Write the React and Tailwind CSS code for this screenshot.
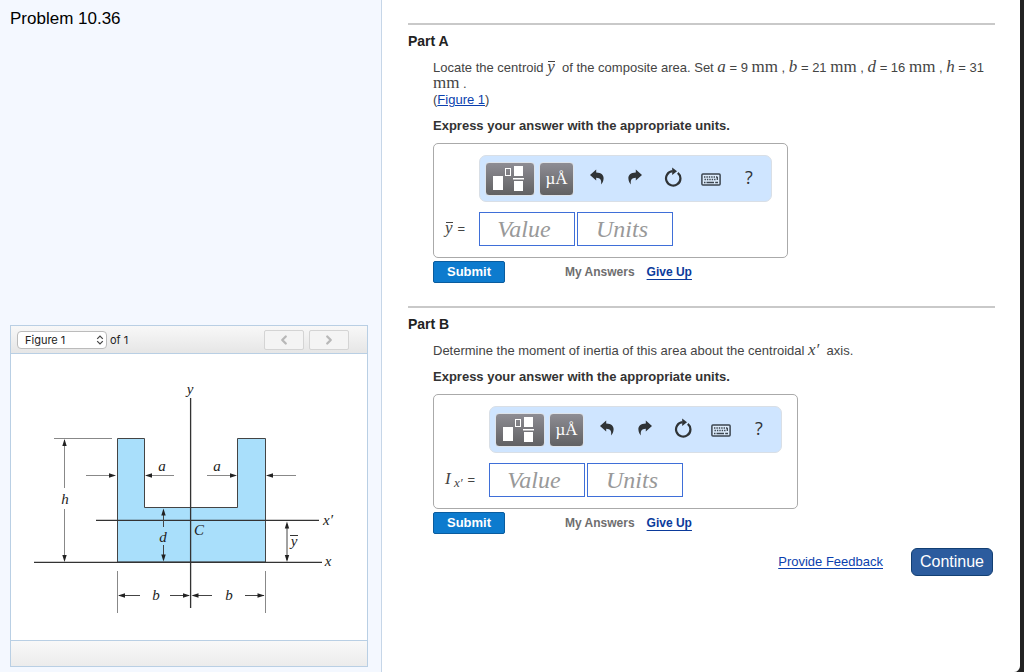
import {useState} from 'react';
import {ChevronLeft, ChevronRight} from 'lucide-react';

const MATH = "font-['Liberation_Serif',serif] text-[17px] leading-[0px]";

function Var({children}) {
  return <i className={MATH}>{children}</i>;
}

function Unit() {
  return <span className={MATH}>mm</span>;
}

/* Letter with a bar above it */
function Bar({children}) {
  return (
    <i className={`${MATH} relative`}>
      {children}
      <span className="absolute left-[1px] top-1 h-px w-[7px] bg-[#444]" />
    </i>
  );
}

function TemplateIcon() {
  return (
    <svg viewBox="0 0 36 28" className="w-9 h-7" aria-hidden="true">
      <rect x="1" y="11" width="10" height="14" fill="#fff" />
      <rect x="13.5" y="3.5" width="5" height="7" fill="none" stroke="#fff" />
      <rect x="22" y="1" width="9" height="10" fill="#fff" />
      <rect x="21" y="13" width="11" height="1.5" fill="#fff" />
      <rect x="22" y="16" width="9" height="10" fill="#fff" />
    </svg>
  );
}

function ArrowIcon({flip}) {
  return (
    <svg
      viewBox="0 0 14 16"
      className={`mb-1 h-4 w-[14px] ${flip ? '-scale-x-100' : ''}`}
      aria-hidden="true"
    >
      <path
        d="M0 6 L6.2 0.5 V3.4 C11.5 3.5 13.8 6 13.6 9.5 C13.5 12 12.5 14 11 15.5 C11.8 11.2 10.5 9 6.2 8.8 V11.5 Z"
        fill="#2f3336"
      />
    </svg>
  );
}

function ResetIcon() {
  return (
    <svg viewBox="0 0 18 20" className="mb-1 h-5 w-[18px]" aria-hidden="true">
      <path
        d="M13.8 5.8 A7.2 7.2 0 1 1 8.5 4.2"
        fill="none"
        stroke="#2f3336"
        strokeWidth="2.2"
      />
      <path d="M8.2 0.5 L13 4.2 L8.2 8 Z" fill="#2f3336" />
    </svg>
  );
}

function KeyboardIcon() {
  return (
    <svg viewBox="0 0 20 13" className="mt-[2px] h-[13px] w-5" aria-hidden="true">
      <rect
        x="0.9"
        y="0.9"
        width="18.2"
        height="11.2"
        rx="1"
        fill="#dcebfb"
        stroke="#3c4650"
        strokeWidth="1.5"
      />
      <path
        d="M3 4 H17 M3.5 6.5 H15.5"
        stroke="#3c4650"
        strokeWidth="1.4"
        strokeDasharray="1.4 1"
      />
      <path
        d="M3 9.5 H4.500 M5.5 9.5 H13 M14.2 9.5 H17 M16.3 4 V7"
        stroke="#3c4650"
        strokeWidth="1.3"
      />
    </svg>
  );
}

function ToolButton({label, children}) {
  return (
    <button
      type="button"
      aria-label={label}
      className="flex h-8 w-[38px] items-center justify-center"
    >
      {children}
    </button>
  );
}

function Toolbar() {
  const dark =
    'flex h-[34px] items-center justify-center rounded-[4px] border border-[#dde3ea] bg-linear-to-b from-[#8e8d94] to-[#616163] text-white';
  return (
    <div className="flex h-[47px] items-center rounded-[7px] border border-[#d9dfe6] bg-[#cfe5ff] pl-[5px] pr-[3px]">
      <button type="button" aria-label="Templates" className={`${dark} w-[50px]`}>
        <TemplateIcon />
      </button>
      <button
        type="button"
        aria-label="Symbols"
        className={`${dark} ml-1 w-[35px] font-['Liberation_Serif',serif] text-[17px]`}
      >
        µÅ
      </button>
      <div className="ml-1 flex">
        <ToolButton label="Undo">
          <ArrowIcon />
        </ToolButton>
        <ToolButton label="Redo">
          <ArrowIcon flip />
        </ToolButton>
        <ToolButton label="Reset">
          <ResetIcon />
        </ToolButton>
        <ToolButton label="Keyboard">
          <KeyboardIcon />
        </ToolButton>
        <ToolButton label="Help">
          <span className="mb-1 font-['Open_Sans',sans-serif] text-[18px] text-[#2f3336]">
            ?
          </span>
        </ToolButton>
      </div>
    </div>
  );
}

function Part({id, title, symbol, labelWidth, children}) {
  const field =
    "h-[34px] w-24 border border-[#3f6fd8] bg-white pr-[6px] text-center font-['Liberation_Serif',serif] text-[24px] italic placeholder:text-[#999] focus:outline-none";
  return (
    <section className="border-t-2 border-[#c9c9c9] pt-2">
      <h2 className="text-[14px] leading-4 font-bold text-[#222]">{title}</h2>
      <div className="ml-[25px] mt-[11px]">
        {children}
        <p className="mt-[10px] font-bold text-[#333]">
          Express your answer with the appropriate units.
        </p>
        <div className="mt-[9px] flex w-fit items-end rounded-[5px] border border-[#aaa] py-[11px] pl-[11px] pr-[15px]">
          <label
            htmlFor={`${id}-value`}
            className={`${labelWidth} flex h-[34px] items-center gap-[5px]`}
          >
            <span>{symbol}</span>
            <span>=</span>
          </label>
          <div>
            <Toolbar />
            <div className="mt-[10px] flex gap-[2px]">
              <input id={`${id}-value`} placeholder="Value" className={field} />
              <input aria-label="Units" placeholder="Units" className={field} />
            </div>
          </div>
        </div>
        <div className="mt-[3px] flex items-center font-bold">
          <button
            type="button"
            className="h-[22px] w-[72px] rounded-[2px] border border-[#0a5c9e] bg-[#0d7bce] text-white"
          >
            Submit
          </button>
          <span className="ml-[60px] text-[12px] text-[#6e6e6e]">
            My Answers
          </span>
          <a
            href="#give-up"
            className="ml-3 text-[12px] text-[#0b3a9b] underline underline-offset-3"
          >
            Give Up
          </a>
        </div>
      </div>
    </section>
  );
}

/* Filled arrow head, pointing in the given direction */
function Head({x, y, dir}) {
  const angle = {right: 0, down: 90, left: 180, up: 270}[dir];
  return (
    <path
      d="M0 0 L-7 -2.2 V2.2 Z"
      fill="#222"
      transform={`translate(${x} ${y}) rotate(${angle})`}
    />
  );
}

function Diagram() {
  return (
    <svg
      viewBox="11 354 356 286"
      className="block w-full"
      role="img"
      aria-label="U-shaped composite area"
    >
      <path
        d="M117.5 562 V438.5 H144.5 V507.5 H237.5 V438.5 H265.5 V562 Z"
        fill="#a9dffb"
        stroke="#444"
      />
      <g stroke="#333" strokeWidth="1.3">
        <path d="M34 562.3 H322 M96 520.4 H319 M190.6 398 V608" />
      </g>
      <g stroke="#888">
        <path d="M54 438.5 H112 M64.5 440 V488 M64.5 509 V560" />
        <path d="M86 475.5 H112 M148 475.5 H174 M207 475.5 H233 M270 475.5 H296" />
        <path d="M117.5 571 V613 M265.5 571 V613" />
      </g>
      <g stroke="#444">
        <path d="M163.5 510 V527 M163.5 545 V560 M287 524 V560" />
        <path d="M119 595.5 H140 M170 595.5 H189 M193 595.5 H212 M245 595.5 H264" />
      </g>
      <Head x={64.5} y={439} dir="up" />
      <Head x={64.5} y={562} dir="down" />
      <Head x={116} y={475.5} dir="right" />
      <Head x={145} y={475.5} dir="left" />
      <Head x={237} y={475.5} dir="right" />
      <Head x={266} y={475.5} dir="left" />
      <Head x={163.5} y={508.5} dir="up" />
      <Head x={163.5} y={561.5} dir="down" />
      <Head x={287} y={521.5} dir="up" />
      <Head x={287} y={562} dir="down" />
      <Head x={118} y={595.5} dir="left" />
      <Head x={190} y={595.5} dir="right" />
      <Head x={191.5} y={595.5} dir="left" />
      <Head x={264.5} y={595.5} dir="right" />
      <path d="M290 535.5 H298" stroke="#333" />
      <g
        className="font-['Liberation_Serif',serif] text-[15px] italic"
        fill="#222"
        textAnchor="middle"
      >
        <text x="190" y="394">y</text>
        <text x="162" y="471">a</text>
        <text x="217" y="471">a</text>
        <text x="65" y="504">h</text>
        <text x="163" y="542">d</text>
        <text x="199" y="535">C</text>
        <text x="294" y="546">y</text>
        <text x="328" y="525">x′</text>
        <text x="328" y="566">x</text>
        <text x="156" y="600">b</text>
        <text x="229" y="600">b</text>
      </g>
    </svg>
  );
}

function FigurePanel() {
  const [figure, setFigure] = useState('1');
  const nav =
    'flex h-5 w-10 items-center justify-center rounded-[2px] border border-[#d4d4d4] bg-[#f4f4f4] text-[#b8b8b8]';
  return (
    <div className="border border-[#b9cfe4] bg-white">
      <div className="flex h-7 items-center border-b border-[#b9cfe4] bg-linear-to-b from-[#f8f8f8] to-[#e6e6e6] pl-[6px] pr-[18px] font-['Inter',sans-serif] text-[12px] text-[#222]">
        <div className="relative">
          <select
            aria-label="Figure"
            value={figure}
            onChange={(e) => setFigure(e.target.value)}
            className="block h-[18px] w-[90px] appearance-none rounded-[4px] border border-[#bbb] bg-white pl-[7px] text-[11px] leading-4"
          >
            <option value="1">Figure 1</option>
          </select>
          <svg
            viewBox="0 0 8 10"
            className="pointer-events-none absolute right-[3px] top-1 h-[10px] w-2"
            aria-hidden="true"
          >
            <path
              d="M1.2 3.8 L4 1 L6.8 3.8 M1.2 6.2 L4 9 L6.8 6.2"
              fill="none"
              stroke="#444"
              strokeWidth="1.2"
            />
          </svg>
        </div>
        <span className="ml-[3px] text-[11px]">of 1</span>
        <div className="ml-auto flex gap-[5px]">
          <button type="button" aria-label="Previous figure" className={nav}>
            <ChevronLeft size={14} strokeWidth={4} />
          </button>
          <button type="button" aria-label="Next figure" className={nav}>
            <ChevronRight size={14} strokeWidth={4} />
          </button>
        </div>
      </div>
      <Diagram />
      <div className="h-[26px] border-t border-[#b9cfe4] bg-linear-to-b from-[#f8f8f8] to-[#ececec]" />
    </div>
  );
}

export default function App() {
  return (
    <div className="min-h-screen bg-[#222] pr-1 font-['Liberation_Sans',sans-serif] text-[13px] leading-4 text-[#444]">
      <div className="flex min-h-screen overflow-hidden rounded-br-[6px] bg-white">
        <aside className="flex w-[382px] shrink-0 flex-col justify-between border-r border-[#c6d6e8] bg-[#f4f8ff] pb-[5px] pl-[10px] pr-[13px] pt-[9px]">
          <h1 className="text-[17px] leading-5 text-black">Problem 10.36</h1>
          <FigurePanel />
        </aside>

        <main className="flex-1 pl-[26px] pr-[25px] pt-[23px]">
          <Part
            id="part-a"
            title="Part A"
            labelWidth="w-[34px]"
            symbol={<Bar>y</Bar>}
          >
            <p>
              Locate the centroid <Bar>y</Bar>&nbsp; of the composite area. Set{' '}
              <Var>a</Var> = 9 <Unit /> , <Var>b</Var> = 21 <Unit /> ,{' '}
              <Var>d</Var> = 16 <Unit /> , <Var>h</Var> = 31 <Unit /> .
              <br />(
              <a href="#figure-1" className="text-[#0b3fae] underline">
                Figure 1
              </a>
              )
            </p>
          </Part>

          <div className="mt-[23px]">
            <Part
              id="part-b"
              title="Part B"
              labelWidth="w-[44px]"
              symbol={
                <i className={MATH}>
                  I<sub className="text-[13px]"> x′</sub>
                </i>
              }
            >
              <p>
                Determine the moment of inertia of this area about the
                centroidal <Var>x′</Var>&nbsp; axis.
              </p>
            </Part>
          </div>

          <div className="mt-[14px] flex items-center justify-end gap-7 pr-[2px]">
            <a
              href="#feedback"
              className="text-[#0b3fae] underline underline-offset-2"
            >
              Provide Feedback
            </a>
            <button
              type="button"
              className="h-7 w-[82px] rounded-[6px] border border-[#123f73] bg-[#2c5c9e] text-[16px] text-white"
            >
              Continue
            </button>
          </div>
        </main>
      </div>
    </div>
  );
}
